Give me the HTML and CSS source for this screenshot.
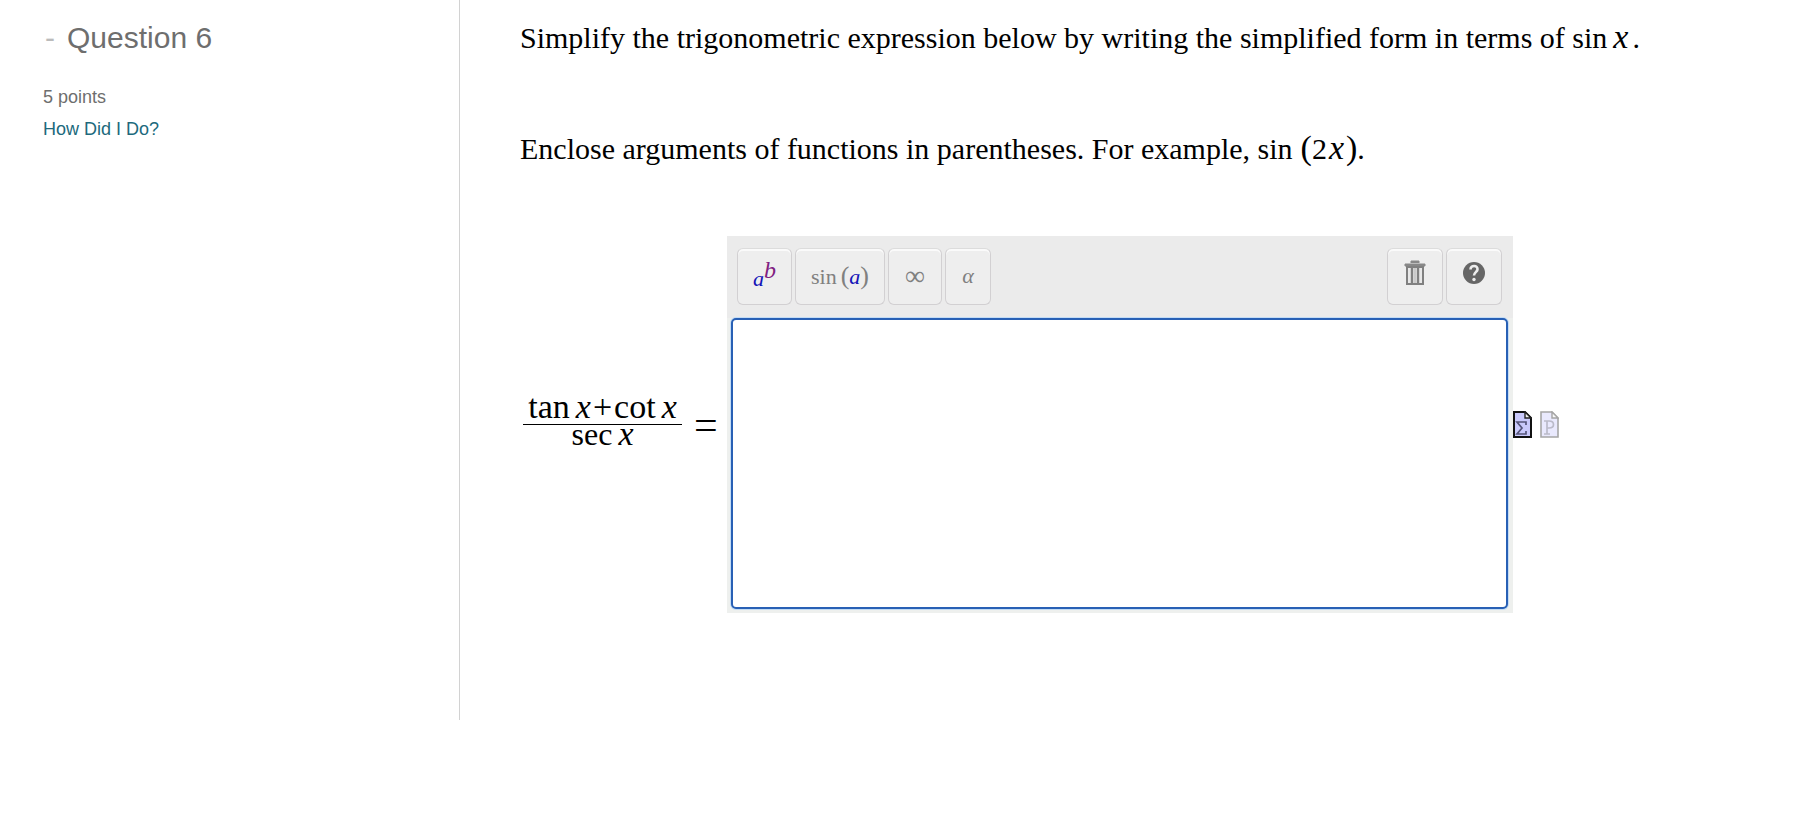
FILE: index.html
```
<!DOCTYPE html>
<html lang="en">
	<head>
		<meta charset="utf-8">
		<title>Question 6</title>
		<link rel="stylesheet" href="styles.css">
	</head>
	<body>
		<div class="question">
  <aside class="info">
    <h3><span class="dash">-</span>Question 6</h3>
    <p class="points">5 points</p>
    <a class="how" href="#">How Did I Do?</a>
  </aside>
  <main class="content">
    <p>Simplify the trigonometric expression below by writing the simplified form in terms of <span class="math">sin<i>x</i></span><span class="dot">.</span></p>
    <p>Enclose arguments of functions in parentheses. For example, <span class="math">sin<span class="paren">(</span>2<i class="near">x</i><span class="close">)</span></span>.</p>
    <div class="equation">
      <label class="formula" for="answer">
        <span class="fraction">
          <span class="top">tan<i>x</i><span class="plus">+</span>cot<i>x</i></span>
          <span class="bottom">sec<i>x</i></span>
        </span>
        <span class="equals">=</span>
      </label>
      <div class="editor">
        <div class="toolbar">
          <button class="tool power" type="button"><i class="a">a</i><sup>b</sup></button>
          <button class="tool func" type="button">sin<span class="paren">(</span><i class="a">a</i><span class="close">)</span></button>
          <button class="tool inf" type="button">∞</button>
          <button class="tool alpha" type="button"><i>α</i></button>
          <span class="spacer"></span>
          <button class="tool icon" type="button" aria-label="Clear">
            <svg width="22" height="26" viewBox="0 0 22 26">
              <path d="M1 4h20v2H1zM7 3V1h8v2" fill="#888" stroke="#888" stroke-width="1"/>
              <path d="M3 7h16v17H3z" fill="#e8e8e8" stroke="#808080" stroke-width="2"/>
              <path d="M8 8v15M14 8v15" stroke="#808080" stroke-width="2.4"/>
              <path d="M11 8v15" stroke="#aaa" stroke-width="1"/>
            </svg>
          </button>
          <button class="tool icon" type="button" aria-label="Help">
            <svg width="24" height="24" viewBox="0 0 24 24">
              <circle cx="12" cy="12" r="11" fill="#666"/>
              <path d="M8.5 8.5C8.5 3.5 16 4 15.5 8.5C15.2 11 12 11.5 12 14.5" fill="none" stroke="#eee" stroke-width="2.6"/>
              <circle cx="12" cy="18.5" r="1.7" fill="#eee"/>
            </svg>
          </button>
        </div>
        <textarea class="answer" id="answer"></textarea>
      </div>
      <div class="modes">
        <a href="#" aria-label="Equation editor">
          <svg width="19" height="27" viewBox="0 0 19 27">
            <path d="M1 1h11l6 6v19H1z" fill="#c9c9fb" stroke="#111" stroke-width="2"/>
            <path d="M12 1v6h6z" fill="#eee" stroke="#222" stroke-width="1.4"/>
            <path d="M13 14v-3H4l5 6-5 6h9v-3" fill="none" stroke="#55557a" stroke-width="1.7"/>
          </svg>
        </a>
        <a class="off" href="#" aria-label="Preview">
          <svg width="19" height="27" viewBox="0 0 19 27">
            <path d="M1 1h11l6 6v19H1z" fill="#c9c9fb" stroke="#222" stroke-width="1.6"/>
            <path d="M12 1v6h6z" fill="#eee" stroke="#222" stroke-width="1.4"/>
            <path d="M4 10h5c6 0 6 7 0 7H7M7 10v13M4 23h6" fill="none" stroke="#55557a" stroke-width="1.7"/>
          </svg>
        </a>
      </div>
    </div>
  </main>
</div>
	</body>
</html>
```
FILE: styles.css
```
body {
  margin: 0;
  background: #fff;
  font-family: "Liberation Sans", Arial, sans-serif;
}

* {
  box-sizing: border-box;
}

.question {
  display: flex;
}

.info {
  flex: 0 0 460px;
  padding: 20px 43px;
  border-right: 1px solid #d2d2d2;
  color: #6e6e6e;
}

.info h3 {
  margin: 0 0 30px;
  font-size: 30px;
  line-height: 36px;
  font-weight: normal;
}

.dash {
  display: inline-block;
  width: 24px;
  padding-left: 2px;
  color: #bbb;
}

.points {
  margin: 0 0 10px;
  font-size: 18px;
  line-height: 22px;
}

.how {
  display: block;
  color: #20697c;
  font-size: 18px;
  line-height: 22px;
  text-decoration: none;
}

.content {
  flex: 1;
  min-width: 0;
  padding: 18px 60px 107px;
  color: #000;
  font-family: "Liberation Serif", "Times New Roman", serif;
  font-size: 30px;
}

.content p {
  margin: 0 0 70px;
  line-height: 40px;
}

.math i,
.fraction i {
  margin-left: 6px;
  font-size: 34px;
  line-height: 0;
}

.math .near {
  margin: 0 2px;
}

.math .paren {
  margin-left: 8px;
}

.paren,
.close {
  font-size: 34px;
}

.dot {
  margin-left: 4px;
}

.equation {
  display: flex;
  align-items: center;
  margin-top: -3px;
}

.formula {
  display: flex;
  align-items: center;
  flex: none;
}

.fraction {
  width: 159px;
  margin: 0 12px 0 3px;
  padding-bottom: 12px;
  font-size: 32px;
  text-align: center;
  white-space: nowrap;
}

.top,
.bottom {
  display: block;
}

.top {
  padding-bottom: 4px;
  border-bottom: 1px solid #000;
  font-size: 34px;
  line-height: 26px;
}

.bottom {
  line-height: 18px;
}

.plus {
  margin: 0 2px;
}

.equals {
  width: 33px;
  font-size: 42px;
}

.editor {
  flex: 0 1 786px;
  padding-bottom: 4px;
  background: #eef0ee;
}

.toolbar {
  display: flex;
  gap: 3px;
  padding: 12px 11px 13px 10px;
  background: #ebebeb;
}

.tool {
  height: 57px;
  padding: 0 0 2px;
  background: #eee;
  border: 1px solid #d2d0d2;
  border-top-color: #dcdcdc;
  border-radius: 6px;
  box-shadow: inset 0 2px #fafafa;
  color: #808080;
  font-family: "Liberation Serif", "Times New Roman", serif;
  font-size: 22px;
}

.tool .a {
  color: #1414b8;
}

.tool .paren,
.tool .close {
  font-size: 26px;
}

.tool .paren {
  margin-left: 4px;
}

.power {
  width: 55px;
  padding-top: 6px;
}

.icon {
  width: 56px;
}

.power sup {
  color: #802080;
  font-size: 24px;
  font-style: italic;
  line-height: 0;
}

.func {
  width: 90px;
}

.inf {
  width: 54px;
  font-size: 28px;
}

.alpha {
  width: 46px;
}

.spacer {
  flex: 1;
}

.answer {
  display: block;
  width: calc(100% - 9px);
  height: 291px;
  margin: 0 5px 0 4px;
  padding: 8px;
  background: #fff;
  border: 2px solid #2860b5;
  border-radius: 5px;
  box-shadow: 0 0 0 1px #c3dcf5;
  font-size: 30px;
  resize: none;
  outline: none;
}

.modes {
  display: flex;
  gap: 8px;
}

.modes svg {
  display: block;
}

.off {
  opacity: 0.4;
}
```
